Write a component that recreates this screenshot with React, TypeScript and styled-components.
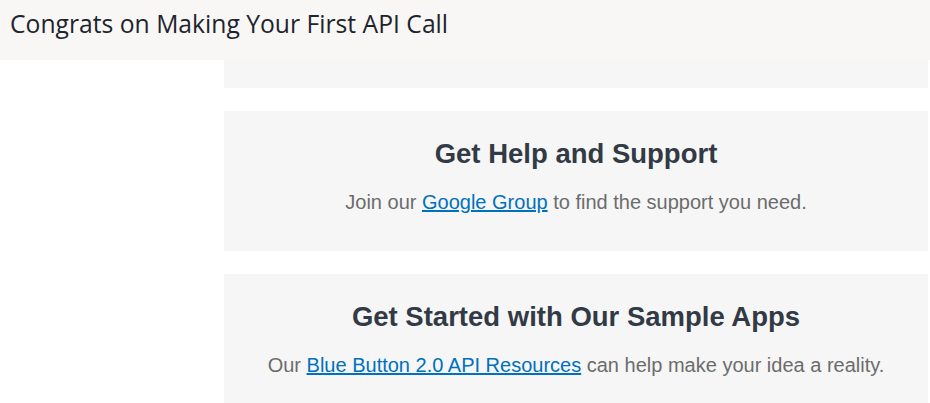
import React from "react";
import styled, { createGlobalStyle } from "styled-components";

const Global = createGlobalStyle`
  html, body { margin: 0; padding: 0; background: #ffffff; }
  body { font-family: "Liberation Sans", Arial, sans-serif; }
`;

const Header = styled.header`
  height: 60px;
  box-sizing: border-box;
  background: #f8f7f6;
  padding: 7px 10px 0;
`;

const Title = styled.h1`
  margin: 0;
  font-family: "Open Sans", "Noto Sans", sans-serif;
  font-size: 24.7px;
  line-height: normal;
  font-weight: 400;
  color: #1e242c;
`;

const Layout = styled.div`
  display: grid;
  grid-template-columns: 224px 704px;
`;

const Sidebar = styled.aside``;

const Content = styled.main`
  display: flex;
  flex-direction: column;
  gap: 23px;
`;

const Card = styled.section<{ $h?: number }>`
  background: #f6f6f6;
  height: ${(p) => (p.$h ? `${p.$h}px` : "auto")};
  box-sizing: border-box;
  padding: 28px 20px 0;
  text-align: center;
`;

const CardTitle = styled.h2`
  margin: 0;
  font-size: 27.5px;
  line-height: 30px;
  font-weight: 700;
  color: #323a45;
`;

const CardText = styled.p`
  margin: 21px 0 0;
  font-size: 20px;
  line-height: 24px;
  color: #6c6c6c;
`;

const Link = styled.a`
  color: #0071bc;
  text-decoration: underline;
`;

export default function App() {
  return (
    <>
      <Global />
      <Header>
        <Title>Congrats on Making Your First API Call</Title>
      </Header>
      <Layout>
        <Sidebar />
        <Content>
          <Card $h={28} />
          <Card $h={140}>
            <CardTitle>Get Help and Support</CardTitle>
            <CardText>
              Join our <Link href="#">Google Group</Link> to find the support you need.
            </CardText>
          </Card>
          <Card $h={140}>
            <CardTitle>Get Started with Our Sample Apps</CardTitle>
            <CardText>
              Our <Link href="#">Blue Button 2.0 API Resources</Link> can help make your idea a reality.
            </CardText>
          </Card>
        </Content>
      </Layout>
    </>
  );
}
